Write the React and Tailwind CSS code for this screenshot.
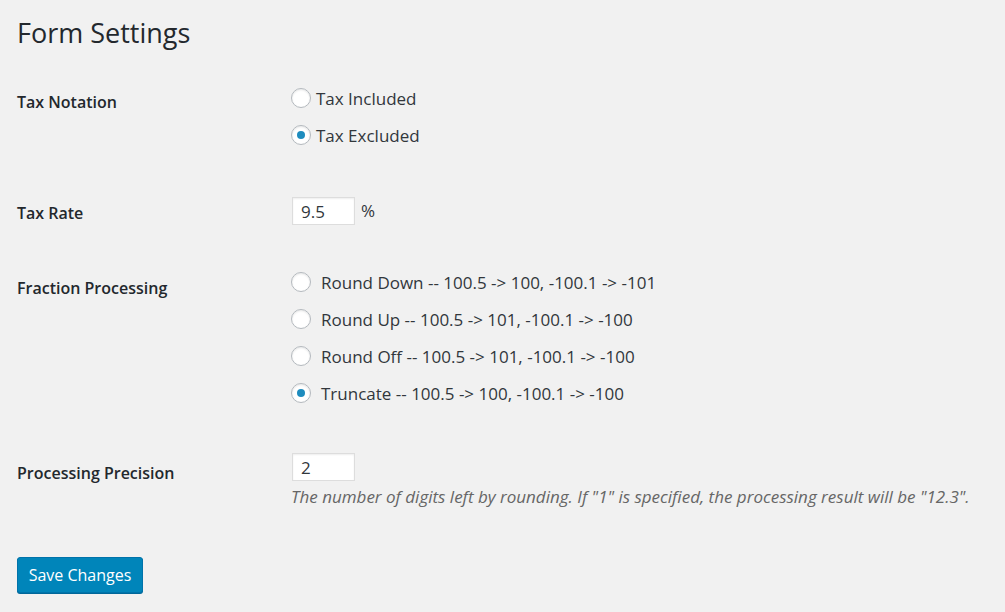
import React from "react";

function Radio({ checked, label, gap }) {
  return (
    <div className="flex items-start h-5">
      <span className="-mt-px flex h-5 w-5 shrink-0 items-center justify-center rounded-full border border-[#b4b9be] bg-white shadow-[inset_0_1px_2px_rgba(0,0,0,0.1)]">
        {checked && <span className="h-2 w-2 rounded-full bg-[#1e8cbe]" />}
      </span>
      <span className={`${gap} whitespace-nowrap text-[17px] leading-5 text-[#32373c]`}>{label}</span>
    </div>
  );
}

function TextBox({ value }) {
  return (
    <input
      readOnly
      value={value}
      className="ml-px h-[28px] w-[63px] border border-[#ddd] bg-white pl-[8px] text-[17px] text-[#32373c] shadow-[inset_0_1px_2px_rgba(0,0,0,0.07)] outline-none"
    />
  );
}

export default function App() {
  return (
    <div className="min-h-screen bg-[#f1f1f1] pl-[17px] pt-[15px] font-['Open_Sans',sans-serif] text-[#23282d]">
      <h1 className="text-[27px] font-normal leading-[36px] text-[#23282d]">Form Settings</h1>

      <div className="mt-[38px] flex">
        <div className="w-[274px] pt-[3px] text-[16px] font-semibold leading-5">Tax Notation</div>
        <div className="flex flex-col gap-[17px]">
          <Radio label="Tax Included" gap="ml-[5px]" />
          <Radio label="Tax Excluded" gap="ml-[5px]" checked />
        </div>
      </div>

      <div className="mt-[51px] flex">
        <div className="w-[274px] pt-[6px] text-[16px] font-semibold leading-5">Tax Rate</div>
        <div className="flex items-center gap-[6px]">
          <TextBox value="9.5" />
          <span className="text-[17px] text-[#32373c]">%</span>
        </div>
      </div>

      <div className="mt-[48px] flex">
        <div className="w-[274px] pt-[5px] text-[16px] font-semibold leading-5">Fraction Processing</div>
        <div className="flex flex-col gap-[17px]">
          <Radio label="Round Down -- 100.5 -> 100, -100.1 -> -101" gap="ml-[10px]" />
          <Radio label="Round Up -- 100.5 -> 101, -100.1 -> -100" gap="ml-[10px]" />
          <Radio label="Round Off -- 100.5 -> 101, -100.1 -> -100" gap="ml-[10px]" />
          <Radio label="Truncate -- 100.5 -> 100, -100.1 -> -100" gap="ml-[10px]" checked />
        </div>
      </div>

      <div className="mt-[49px] flex">
        <div className="w-[274px] pt-[10px] text-[16px] font-semibold leading-5">Processing Precision</div>
        <div className="flex flex-col">
          <TextBox value="2" />
          <p className="mt-[6px] whitespace-nowrap text-[17px] italic leading-5 text-[#666]">
            The number of digits left by rounding. If "1" is specified, the processing result will be "12.3".
          </p>
        </div>
      </div>

      <button className="mt-[50px] flex h-[36px] w-[126px] items-center justify-center rounded-[3px] border border-[#0073aa] bg-[#0085ba] text-[16px] text-white shadow-[0_1px_0_#006799]">
        Save Changes
      </button>
    </div>
  );
}
